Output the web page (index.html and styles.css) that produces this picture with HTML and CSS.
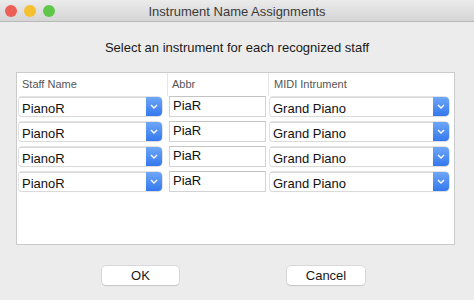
FILE: index.html
```html
<!DOCTYPE html>
<html>
<head>
<meta charset="utf-8">
<link rel="stylesheet" href="styles.css">
</head>
<body>
<div class="window">
  <div class="titlebar">
    <div class="lights">
      <span class="light red"></span>
      <span class="light yellow"></span>
      <span class="light green"></span>
    </div>
    <div class="title">Instrument Name Assignments</div>
  </div>
  <div class="prompt">Select an instrument for each recognized staff</div>
  <div class="table">
    <div class="head">
      <div class="hcell">Staff Name</div>
      <div class="hcell div">Abbr</div>
      <div class="hcell div">MIDI Intrument</div>
    </div>
    <div class="row">
      <div class="cell"><div class="combo c1"><span class="ctext">PianoR</span><span class="cbtn"><svg width="8" height="5" viewBox="0 0 8 5"><path d="M1 1 L4 4 L7 1" fill="none" stroke="#fff" stroke-width="1.4"/></svg></span></div></div>
      <div class="cell"><div class="field">PiaR</div></div>
      <div class="cell"><div class="combo c3"><span class="ctext">Grand Piano</span><span class="cbtn"><svg width="8" height="5" viewBox="0 0 8 5"><path d="M1 1 L4 4 L7 1" fill="none" stroke="#fff" stroke-width="1.4"/></svg></span></div></div>
    </div>
    <div class="row">
      <div class="cell"><div class="combo c1"><span class="ctext">PianoR</span><span class="cbtn"><svg width="8" height="5" viewBox="0 0 8 5"><path d="M1 1 L4 4 L7 1" fill="none" stroke="#fff" stroke-width="1.4"/></svg></span></div></div>
      <div class="cell"><div class="field">PiaR</div></div>
      <div class="cell"><div class="combo c3"><span class="ctext">Grand Piano</span><span class="cbtn"><svg width="8" height="5" viewBox="0 0 8 5"><path d="M1 1 L4 4 L7 1" fill="none" stroke="#fff" stroke-width="1.4"/></svg></span></div></div>
    </div>
    <div class="row">
      <div class="cell"><div class="combo c1"><span class="ctext">PianoR</span><span class="cbtn"><svg width="8" height="5" viewBox="0 0 8 5"><path d="M1 1 L4 4 L7 1" fill="none" stroke="#fff" stroke-width="1.4"/></svg></span></div></div>
      <div class="cell"><div class="field">PiaR</div></div>
      <div class="cell"><div class="combo c3"><span class="ctext">Grand Piano</span><span class="cbtn"><svg width="8" height="5" viewBox="0 0 8 5"><path d="M1 1 L4 4 L7 1" fill="none" stroke="#fff" stroke-width="1.4"/></svg></span></div></div>
    </div>
    <div class="row">
      <div class="cell"><div class="combo c1"><span class="ctext">PianoR</span><span class="cbtn"><svg width="8" height="5" viewBox="0 0 8 5"><path d="M1 1 L4 4 L7 1" fill="none" stroke="#fff" stroke-width="1.4"/></svg></span></div></div>
      <div class="cell"><div class="field">PiaR</div></div>
      <div class="cell"><div class="combo c3"><span class="ctext">Grand Piano</span><span class="cbtn"><svg width="8" height="5" viewBox="0 0 8 5"><path d="M1 1 L4 4 L7 1" fill="none" stroke="#fff" stroke-width="1.4"/></svg></span></div></div>
    </div>
  </div>
  <div class="buttons">
    <div class="btn ok">OK</div>
    <div class="btn cancel">Cancel</div>
  </div>
</div>
</body>
</html>
```
FILE: styles.css
```css
html, body {
  margin: 0;
  padding: 0;
}
body {
  width: 474px;
  height: 300px;
  background: #ececec;
  font-family: "Liberation Sans", Arial, sans-serif;
  overflow: hidden;
}
.window {
  width: 474px;
  height: 300px;
  display: flex;
  flex-direction: column;
}
.titlebar {
  height: 21px;
  border-bottom: 1px solid #b9b9b9;
  background: linear-gradient(#ebebeb, #d5d5d5);
  position: relative;
  display: flex;
  align-items: center;
  justify-content: center;
}
.lights {
  position: absolute;
  left: 5px;
  top: 5px;
  display: flex;
  gap: 7px;
}
.light {
  width: 12px;
  height: 12px;
  border-radius: 50%;
  display: block;
}
.red { background: #ec5f57; }
.yellow { background: #f5c02f; }
.green { background: #5fc84b; }
.title {
  font-size: 13px;
  color: #3a3a3a;
  margin-top: 1px;
}
.prompt {
  margin-top: 18px;
  height: 16px;
  line-height: 16px;
  text-align: center;
  font-size: 13px;
  color: #1a1a1a;
}
.table {
  margin-top: 16px;
  margin-left: 16px;
  width: 437px;
  height: 171px;
  border: 1px solid #cbcbcb;
  background: #fff;
}
.head, .row {
  display: grid;
  grid-template-columns: 150px 101px 1fr;
}
.head {
  height: 23px;
}
.hcell {
  font-size: 11px;
  color: #555;
  line-height: 23px;
  padding-left: 5px;
}
.hcell.div {
  border-left: 1px solid #e6e6e6;
  padding-left: 4px;
}
.head .hcell:last-child {
  padding-left: 5px;
}
.row {
  height: 25px;
}
.cell {
  padding-left: 2px;
}
.combo {
  margin-top: 1px;
  height: 19px;
  display: flex;
  box-sizing: border-box;
  border-radius: 2px 4px 4px 2px;
  box-shadow: 0 0 0 0.5px #c8c8c8, 0 1px 1px rgba(0,0,0,0.08);
  background: #fff;
}
.c1 { width: 143px; }
.c3 { width: 179px; }
.ctext {
  flex: 1;
  font-size: 13px;
  color: #111;
  padding-left: 3px;
  line-height: 22px;
  height: 19px;
  overflow: hidden;
  border-top: 1px solid #d9d9d9;
  box-sizing: border-box;
}
.cbtn {
  width: 16px;
  height: 19px;
  border-radius: 0 4px 4px 0;
  background: linear-gradient(#6ea7f7, #3478ee);
  display: flex;
  align-items: center;
  justify-content: center;
}
.field {
  width: 97px;
  height: 21px;
  box-sizing: border-box;
  border: 1px solid #d3d3d3;
  border-top-color: #c3c3c3;
  font-size: 13px;
  color: #111;
  padding-left: 3px;
  line-height: 17px;
}
.buttons {
  margin-top: 21px;
  display: flex;
}
.btn {
  height: 19px;
  width: 77px;
  box-sizing: border-box;
  background: #fff;
  border-radius: 4px;
  box-shadow: 0 0 0 0.5px #c4c4c4, 0 1px 1px rgba(0,0,0,0.15);
  font-size: 13px;
  color: #1a1a1a;
  text-align: center;
  line-height: 19px;
}
.ok { margin-left: 102px; }
.cancel { margin-left: 108px; width: 78px; }
```
